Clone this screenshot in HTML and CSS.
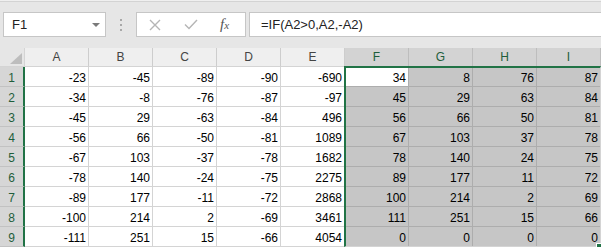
FILE: index.html
```html
<!DOCTYPE html>
<html lang="en">
<head>
  <meta charset="UTF-8" />
  <title>Sheet - formula view</title>
  <link rel="stylesheet" href="styles.css">
</head>
<body>

  <!-- Name box + formula bar -->
  <div class="formula-bar">
    <div class="name-box">
      <span>F1</span>
      <span class="caret"></span>
    </div>
    <div class="grip">
      <svg width="3" height="12" viewBox="0 0 3 12"><rect x="0" y="0" width="2" height="2"/><rect x="0" y="5" width="2" height="2"/><rect x="0" y="10" width="2" height="2"/></svg>
    </div>
    <div class="fx-buttons">
      <svg class="icon-x" width="12" height="12" viewBox="0 0 12 12"><path d="M1 1 L11 11 M11 1 L1 11"/></svg>
      <svg class="icon-ok" width="14" height="11" viewBox="0 0 14 11"><path d="M1 5.5 L5 9.5 L13 1"/></svg>
      <span class="fx">f<span class="fx-x">x</span></span>
    </div>
    <div class="formula-input">=IF(A2&gt;0,A2,-A2)</div>
  </div>

  <!-- Grid -->
  <div class="sheet">
    <div class="corner"><svg width="24" height="18" viewBox="0 0 24 18"><polygon points="22,5 22,16 10,16"/></svg></div>
    <div class="col-head">A</div>
    <div class="col-head">B</div>
    <div class="col-head">C</div>
    <div class="col-head">D</div>
    <div class="col-head">E</div>
    <div class="col-head sel">F</div>
    <div class="col-head sel">G</div>
    <div class="col-head sel">H</div>
    <div class="col-head sel">I</div>

    <div class="row-head">1</div>
    <div class="cell">-23</div><div class="cell">-45</div><div class="cell">-89</div><div class="cell">-90</div><div class="cell">-690</div>
    <div class="cell active">34</div><div class="cell sel">8</div><div class="cell sel">76</div><div class="cell sel">87</div>

    <div class="row-head">2</div>
    <div class="cell">-34</div><div class="cell">-8</div><div class="cell">-76</div><div class="cell">-87</div><div class="cell">-97</div>
    <div class="cell sel">45</div><div class="cell sel">29</div><div class="cell sel">63</div><div class="cell sel">84</div>

    <div class="row-head">3</div>
    <div class="cell">-45</div><div class="cell">29</div><div class="cell">-63</div><div class="cell">-84</div><div class="cell">496</div>
    <div class="cell sel">56</div><div class="cell sel">66</div><div class="cell sel">50</div><div class="cell sel">81</div>

    <div class="row-head">4</div>
    <div class="cell">-56</div><div class="cell">66</div><div class="cell">-50</div><div class="cell">-81</div><div class="cell">1089</div>
    <div class="cell sel">67</div><div class="cell sel">103</div><div class="cell sel">37</div><div class="cell sel">78</div>

    <div class="row-head">5</div>
    <div class="cell">-67</div><div class="cell">103</div><div class="cell">-37</div><div class="cell">-78</div><div class="cell">1682</div>
    <div class="cell sel">78</div><div class="cell sel">140</div><div class="cell sel">24</div><div class="cell sel">75</div>

    <div class="row-head">6</div>
    <div class="cell">-78</div><div class="cell">140</div><div class="cell">-24</div><div class="cell">-75</div><div class="cell">2275</div>
    <div class="cell sel">89</div><div class="cell sel">177</div><div class="cell sel">11</div><div class="cell sel">72</div>

    <div class="row-head">7</div>
    <div class="cell">-89</div><div class="cell">177</div><div class="cell">-11</div><div class="cell">-72</div><div class="cell">2868</div>
    <div class="cell sel">100</div><div class="cell sel">214</div><div class="cell sel">2</div><div class="cell sel">69</div>

    <div class="row-head">8</div>
    <div class="cell">-100</div><div class="cell">214</div><div class="cell">2</div><div class="cell">-69</div><div class="cell">3461</div>
    <div class="cell sel">111</div><div class="cell sel">251</div><div class="cell sel">15</div><div class="cell sel">66</div>

    <div class="row-head">9</div>
    <div class="cell">-111</div><div class="cell">251</div><div class="cell">15</div><div class="cell">-66</div><div class="cell">4054</div>
    <div class="cell sel">0</div><div class="cell sel">0</div><div class="cell sel">0</div><div class="cell sel">0</div>

    <!-- Selection outline F1:I9 -->
    <div class="selection"><span class="fill-handle"></span></div>
  </div>

</body>
</html>
```

FILE: styles.css
```css
body {
  margin: 0;
  background: #fff;
  font-family: "Liberation Sans", Arial, sans-serif;
  overflow: hidden;
}
/* Formula bar strip */
.formula-bar {
  display: flex;
  align-items: center;
  height: 48px;
  box-sizing: border-box;
  padding: 12px 0 11px 3px;
  background: #e6e6e6;
  box-shadow: inset 0 1px #efefef, inset 0 2px #d3d3d3;
}
.name-box {
  display: flex;
  align-items: center;
  width: 103px;
  height: 25px;
  box-sizing: border-box;
  padding: 0 5px 0 8px;
  background: #fff;
  border: 1px solid #c6c6c6;
  font-size: 13px;
  color: #222;
}
.name-box .caret {
  margin-left: auto;
  border-left: 4px solid transparent;
  border-right: 4px solid transparent;
  border-top: 4px solid #7a7a7a;
}
.grip {
  width: 30px;
  display: flex;
  justify-content: center;
  padding-top: 1px;
}
.grip svg {
  fill: #a8a8a8;
}
.fx-buttons {
  display: flex;
  align-items: center;
  width: 110px;
  height: 25px;
  box-sizing: border-box;
  background: #fff;
  border: 1px solid #c6c6c6;
  padding-left: 12px;
}
.fx-buttons svg {
  fill: none;
  stroke: #b5b5b5;
  stroke-width: 1.4;
}
.icon-ok {
  margin-left: 23px;
}
.fx {
  margin-left: 22px;
  font-family: "Liberation Serif", serif;
  font-style: italic;
  font-size: 15px;
  color: #555;
}
.fx-x {
  font-size: 11px;
}
.formula-input {
  flex: 1;
  height: 25px;
  box-sizing: border-box;
  margin-left: 3px;
  margin-right: -2px;
  padding-left: 11px;
  background: #fff;
  border: 1px solid #c6c6c6;
  font-size: 13px;
  line-height: 23px;
  color: #222;
}
/* Worksheet grid */
.sheet {
  position: relative;
  display: grid;
  grid-template-columns: 25px repeat(9, 64px);
  grid-template-rows: 19px repeat(9, 20px);
  font-size: 12px;
}
.sheet > div {
  box-sizing: border-box;
  border-right: 1px solid #d4d4d4;
  border-bottom: 1px solid #d4d4d4;
}
.corner {
  background: #e6e6e6;
}
.corner svg {
  display: block;
  fill: #bdbdbd;
}
.col-head {
  display: flex;
  align-items: center;
  justify-content: center;
  background: #efefef;
  color: #444;
  border-right-color: #cdcdcd !important;
}
.col-head.sel {
  background: #d3d3d3;
  color: #1e5e3b;
  border-right-color: #bdbdbd !important;
}
.row-head {
  display: flex;
  align-items: center;
  justify-content: center;
  padding-top: 2px;
  background: #d6d6d6;
  color: #1e5e3b;
  border-right: 2px solid #217346 !important;
  border-bottom-color: #c2c2c2 !important;
}
.cell {
  display: flex;
  align-items: flex-end;
  justify-content: flex-end;
  padding: 0 2px 1px 0;
  line-height: 14px;
  color: #000;
}
.cell.sel {
  background: #c6c6c6;
  border-color: #adadad;
}
.cell.active {
  border-color: #adadad;
}
/* Green outline over the selected range */
.selection {
  position: absolute;
  left: 344px;
  top: 18px;
  width: 257px;
  height: 181px;
  box-sizing: border-box;
  border: 2px solid #217346;
  pointer-events: none;
}
.fill-handle {
  position: absolute;
  right: -3px;
  bottom: -4px;
  width: 5px;
  height: 5px;
  background: #217346;
  border: 1px solid #fff;
}
```
